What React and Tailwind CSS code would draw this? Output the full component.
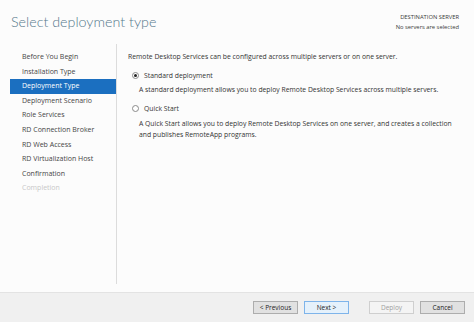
export default function App() {
  const steps = [
    'Before You Begin',
    'Installation Type',
    'Deployment Type',
    'Deployment Scenario',
    'Role Services',
    'RD Connection Broker',
    'RD Web Access',
    'RD Virtualization Host',
    'Confirmation',
    'Completion',
  ];
  const active = 2;

  return (
    <div
      className="w-[474px] h-[322px] bg-[#fcfcfc] flex flex-col text-[#1e1e1e] overflow-hidden"
      style={{ fontFamily: '"Open Sans", "Noto Sans", sans-serif' }}
    >
      {/* header */}
      <div className="h-[44px] flex justify-between pl-[11px] pr-[15px] pt-[11px]">
        <h1
          className="text-[14.3px] font-light text-[#55788b] leading-[22px]"
          style={{ fontFamily: 'Lato, "Open Sans", sans-serif' }}
        >
          Select deployment type
        </h1>
        <div className="text-right text-[5.8px] leading-[10px] pt-[1px] text-[#3a3a3a]">
          <div>DESTINATION SERVER</div>
          <div>No servers are selected</div>
        </div>
      </div>

      {/* body */}
      <div className="flex flex-1">
        <div className="w-[117px] pl-[10px] pt-[6px] border-r border-[#dcdcdc] mb-[8px]">
          {steps.map((s, i) => (
            <div
              key={s}
              className={`h-[14.6px] pl-[12px] text-[7px] leading-[14.6px] ${
                i === active ? 'bg-[#1b6fc0] text-white' : i === 9 ? 'text-[#c8c8c8]' : 'text-[#454545]'
              }`}
            >
              {s}
            </div>
          ))}
        </div>

        <div className="flex-1 pl-[11px] pt-[8px] text-[6.8px] text-[#333]">
          <p className="leading-[9px]">Remote Desktop Services can be configured across multiple servers or on one server.</p>

          <div className="flex items-center gap-[5px] mt-[10px] pl-[4px]">
            <span className="w-[7px] h-[7px] rounded-full border border-[#8a8a8a] bg-white flex items-center justify-center">
              <span className="w-[3px] h-[3px] rounded-full bg-[#222]" />
            </span>
            <span className="leading-[9px]">Standard deployment</span>
          </div>
          <p className="pl-[11px] mt-[5px] leading-[9px]">
            A standard deployment allows you to deploy Remote Desktop Services across multiple servers.
          </p>

          <div className="flex items-center gap-[5px] mt-[10px] pl-[4px]">
            <span className="w-[7px] h-[7px] rounded-full border border-[#8a8a8a] bg-white" />
            <span className="leading-[9px]">Quick Start</span>
          </div>
          <p className="pl-[11px] mt-[5px] leading-[11px] pr-[14px]">
            A Quick Start allows you to deploy Remote Desktop Services on one server, and creates a collection and
            publishes RemoteApp programs.
          </p>
        </div>
      </div>

      {/* footer */}
      <div className="h-[30px] bg-[#f0f0f0] border-t border-[#e3e3e3] flex items-center justify-end pr-[9px] text-[6.5px]">
        <button className="w-[45px] h-[13px] bg-[#e1e1e1] border border-[#adadad] text-[#222]">&lt; Previous</button>
        <button className="w-[45px] h-[13px] ml-[6px] bg-[#e5f1fb] border border-[#7eb4ea] text-[#222]">Next &gt;</button>
        <button className="w-[45px] h-[13px] ml-[20px] bg-[#f4f4f4] border border-[#cfcfcf] text-[#a0a0a0]">Deploy</button>
        <button className="w-[45px] h-[13px] ml-[6px] bg-[#e1e1e1] border border-[#adadad] text-[#222]">Cancel</button>
      </div>
    </div>
  );
}
